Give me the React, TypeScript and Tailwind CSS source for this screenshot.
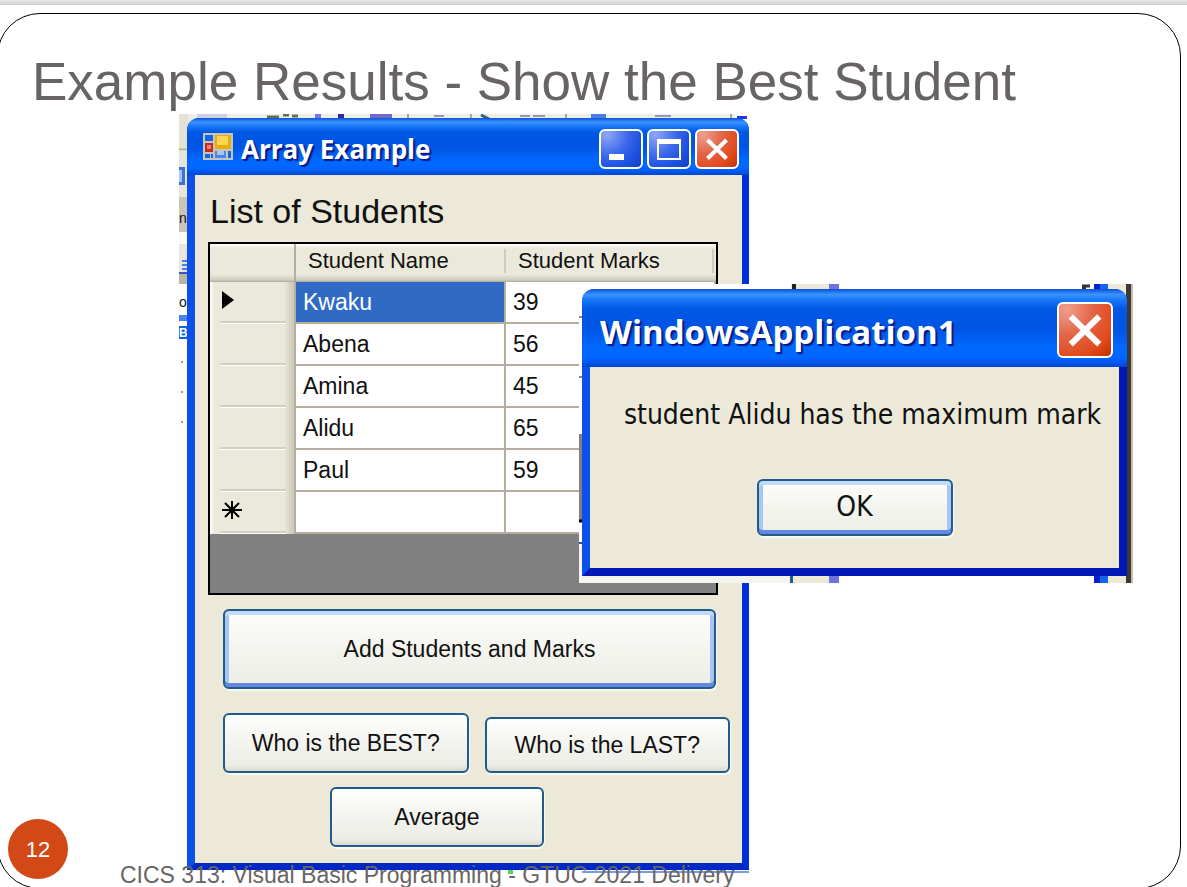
import * as React from "react"

interface Student {
  name: string
  marks: string
}

const students: Student[] = [
  { name: "Kwaku", marks: "39" },
  { name: "Abena", marks: "56" },
  { name: "Amina", marks: "45" },
  { name: "Alidu", marks: "65" },
  { name: "Paul", marks: "59" },
]

const titleBar =
  "flex items-center bg-[linear-gradient(180deg,#0a50d8_0%,#3a94ff_7%,#1a78fa_14%,#0058e6_25%,#0054e3_50%,#0068ff_75%,#0066ff_88%,#0046d5_100%)] font-bold text-white [text-shadow:2px_2px_1px_#0a1883]"

const captionButton =
  "flex items-center justify-center rounded-md border-2 border-white bg-[radial-gradient(circle_at_15%_10%,#8fa8f8_0%,#3a68ea_45%,#1c4fe0_75%,#1440c0_100%)]"

const closeButton =
  "flex items-center justify-center rounded-md border-2 border-white bg-[radial-gradient(circle_at_15%_10%,#f0a090_0%,#e26648_40%,#e24a1c_75%,#c03000_100%)]"

const formButton =
  "rounded-md border-2 border-[#215b8c] bg-[linear-gradient(180deg,#ffffff_0%,#f5f5f1_40%,#eeeee8_88%,#dcd8cc_100%)] text-[23px] leading-6 text-[#111] shadow-[1px_2px_1px_#faf9f3]"

const focusedButton =
  "rounded-md border-2 border-[#215b8c] bg-[linear-gradient(180deg,#fdfdfc_0%,#f4f4ef_50%,#eeeee9_100%)] text-[23px] leading-6 text-[#111] shadow-[inset_0_4px_0_#c3dbfa,inset_0_-4px_0_#6487e0,inset_4px_0_0_#a9c5f4,inset_-4px_0_0_#a9c5f4,1px_2px_1px_#faf9f3]"

function AppIcon() {
  return (
    <svg viewBox="0 0 30 27" className="h-[27px] w-[30px]" aria-hidden="true">
      <rect width="30" height="27" fill="#c5c5bb" />
      <rect x="2" y="2" width="8" height="6" fill="#1565e0" />
      <rect x="2" y="10" width="8" height="9" fill="#c02c22" />
      <rect x="4" y="12" width="4" height="4" fill="#f08070" />
      <rect x="12" y="2" width="16" height="14" fill="#e8ab10" />
      <rect x="14" y="3" width="11" height="9" fill="#ffd650" />
      <rect x="2" y="21" width="5" height="4" fill="#1565e0" />
      <rect x="8" y="21" width="2" height="4" fill="#1565e0" />
      <rect x="12" y="18" width="11" height="7" fill="#4b86e8" />
      <rect x="14" y="18" width="7" height="4" fill="#a5c8fa" />
      <rect x="25" y="18" width="3" height="7" fill="#1565e0" />
    </svg>
  )
}

function CloseIcon({ className }: { className: string }) {
  return (
    <svg viewBox="0 0 24 24" className={className} aria-hidden="true">
      <path d="M2.5 3 21.5 21.500M21.5 3 2.500 21.500" stroke="#fff" strokeWidth="4" />
    </svg>
  )
}

// Pieces of the IDE that show behind the form
function IdeBackdrop() {
  return (
    <svg viewBox="0 0 570 760" className="absolute top-0 left-0 h-[760px] w-[570px]" aria-hidden="true">
      <rect width="570" height="20" fill="#efeee6" />
      <rect width="9" height="35" fill="#e4e2d6" />
      <path d="M0 35.500H9" stroke="#b5b596" strokeWidth="2" />
      <rect y="37" width="9" height="46" fill="#e6e5da" />
      <rect y="53" width="6" height="18" fill="#3f72d8" />
      <rect y="56" width="3" height="12" fill="#a9c6fa" />
      <rect y="83" width="9" height="35" fill="#c9c4b6" />
      <text x="0" y="109" fontSize="14" fill="#111">n</text>
      <rect y="118" width="9" height="12" fill="#fafafa" />
      <rect y="130" width="9" height="30" fill="#e8e7df" />
      <path d="M3 147H9M3 151H9M3 155H9" stroke="#4f7ee0" strokeWidth="2" />
      <path d="M0 159H9" stroke="#355eb0" strokeWidth="2" />
      <rect y="160" width="9" height="10" fill="#b9b5a2" />
      <rect y="170" width="9" height="590" fill="#fff" />
      <text x="0" y="193" fontSize="14" fill="#111">o</text>
      <rect y="201" width="9" height="6" fill="#4c82ee" />
      <rect y="212" width="9" height="13" fill="#1266d4" />
      <text x="0" y="223" fontSize="12" fontWeight="bold" fill="#fff">B</text>
      <path d="M2 248h2M2 278h2M2 308h2" stroke="#999" strokeWidth="2" />
      <rect x="18" width="30" height="4" fill="#cfd0e6" />
      <path d="M88 3h12M104 1h6M113 2h6" stroke="#5f7353" strokeWidth="3" />
      <rect x="136" width="6" height="4" fill="#7a74e8" />
      <rect x="159" width="6" height="4" fill="#302a9c" />
      <rect x="191" width="22" height="4" fill="#7168cc" />
      <path d="M229 0v5M292 0v5M387 0v5M552 0v5" stroke="#a9a88c" strokeWidth="2" />
      <path d="M255 2h10M341 2h10M354 2h12M476 2h16" stroke="#9b96b6" strokeWidth="2" />
      <path d="M302 1l8 4" stroke="#306080" strokeWidth="3" />
      <rect x="412" width="15" height="4" fill="#4c7de0" />
      <rect x="556" width="14" height="30" fill="#fff" />
      <rect x="558" y="2" width="10" height="3" fill="#2336ea" />
      <rect y="756" width="570" height="4" fill="#fff" />
      <path d="M403 758H570" stroke="#7b9be6" strokeWidth="2" />
      <rect x="329" y="756" width="5" height="4" fill="#54d654" />
    </svg>
  )
}

// Slivers of the window that lies under the message box
function MessageBackdrop() {
  return (
    <svg viewBox="0 0 555 299" className="absolute inset-0 h-full w-full" aria-hidden="true">
      <rect width="555" height="299" fill="#fff" />
      <rect x="212" width="38" height="299" fill="#ece9d8" />
      <rect x="213" width="4" height="10" fill="#222" />
      <rect x="250" width="10" height="299" fill="#6f74da" />
      <path d="M503 2h8M503 5h4" stroke="#333" strokeWidth="3" />
      <rect x="515" width="6" height="299" fill="#0a1ed2" />
      <rect x="521" width="8" height="299" fill="#1465ee" />
      <rect x="529" width="19" height="299" fill="#ece9d8" />
      <rect x="547" width="5" height="299" fill="#3c3834" />
      <rect x="552" width="2" height="299" fill="#c5bead" />
      <rect y="150" width="4" height="87" fill="#808080" />
      <path d="M0 33h4M0 93h4" stroke="#8c8878" strokeWidth="2" />
      <path d="M0 237h4" stroke="#000" strokeWidth="3" />
      <path d="M0 259h4" stroke="#215b8c" strokeWidth="2" />
      <rect y="261" width="212" height="38" fill="#f3f3ef" />
      <rect x="211" y="261" width="3" height="38" fill="#215b8c" />
    </svg>
  )
}

function RowHeader({ children }: { children?: React.ReactNode }) {
  return (
    <td className="border-r-2 border-[#b3ae9f] bg-[linear-gradient(90deg,#fff_0px,#ebe9db_4px,#ebe9db_74px,#cfccbb_82px)] p-0">
      <div className="mr-2 ml-[10px] flex h-10 items-center border-b-2 border-[#d0cfc0] pb-1 shadow-[0_1px_0_#fff]">
        {children}
      </div>
    </td>
  )
}

function StudentGrid() {
  return (
    <div className="h-[353px] border-2 border-black bg-[#808080]">
      <table className="w-full table-fixed border-separate border-spacing-0 text-[23px] leading-6 text-[#111]">
        <colgroup>
          <col className="w-[86px]" />
          <col className="w-[210px]" />
          <col />
        </colgroup>
        <thead>
          <tr className="h-[38px] bg-[linear-gradient(180deg,#fff_0px,#ebe9db_4px,#ebe9db_30px,#d0cdbd_36px,#aaa696_38px)] text-left text-[22px]">
            <th className="border-r-2 border-[#b3ae9f] p-0" aria-label="Row" />
            <th className="p-0 pb-1 pl-3 font-normal">
              <div className="border-r-2 border-[#cfccbb]">Student Name</div>
            </th>
            <th className="p-0 pr-[2px] pb-1 pl-3 font-normal">
              <div className="border-r-2 border-[#cfccbb]">Student Marks</div>
            </th>
          </tr>
        </thead>
        <tbody>
          {students.map((student, index) => (
            <tr key={student.name} className="h-[42px]">
              <RowHeader>
                {index === 0 && (
                  <svg viewBox="0 0 12 18" className="ml-[2px] h-[18px] w-3" aria-label="Current row">
                    <path d="M0 0 12 9 0 18Z" fill="#000" />
                  </svg>
                )}
              </RowHeader>
              <td
                className={`border-r-2 border-b-2 border-[#b3ae9f] p-0 pl-[7px] ${
                  index === 0 ? "bg-[#316ac5] text-white" : "bg-white"
                }`}
              >
                {student.name}
              </td>
              <td className="border-r-2 border-b-2 border-[#b3ae9f] bg-white p-0 pl-[7px]">{student.marks}</td>
            </tr>
          ))}
          <tr className="h-[42px]">
            <RowHeader>
              <svg viewBox="0 0 20 20" className="ml-[2px] h-5 w-5" aria-label="New row">
                <path d="M0 10H20M10 1V19M3 3 17 17M17 3 3 17" stroke="#000" strokeWidth="2" />
                <circle cx="10" cy="10" r="3" />
              </svg>
            </RowHeader>
            <td className="border-r-2 border-b-2 border-[#b3ae9f] bg-white" />
            <td className="border-r-2 border-b-2 border-[#b3ae9f] bg-white" />
          </tr>
        </tbody>
      </table>
    </div>
  )
}

function ArrayForm() {
  return (
    <div className="relative w-[570px] pt-1 pl-2 pb-1">
      <IdeBackdrop />
      <div className="relative overflow-hidden rounded-t-xl bg-[#0038dc]">
        <div className={`${titleBar} h-[57px] gap-2 pr-[10px] pl-4`}>
          <AppIcon />
          <h2 className="flex-1 pt-1 font-['Open_Sans','Noto_Sans',sans-serif] text-[26px] leading-8">Array Example</h2>
          <div className="flex gap-1 pt-1">
            <button type="button" aria-label="Minimize" className={`${captionButton} h-10 w-11`}>
              <svg viewBox="0 0 32 28" className="h-7 w-8">
                <rect x="4" y="19" width="15" height="6" fill="#fff" />
              </svg>
            </button>
            <button type="button" aria-label="Maximize" className={`${captionButton} h-10 w-11`}>
              <svg viewBox="0 0 32 28" className="h-7 w-8">
                <path d="M5 5H27V24H5Z" fill="none" stroke="#fff" strokeWidth="2" />
                <rect x="4" y="4" width="24" height="5" fill="#fff" />
              </svg>
            </button>
            <button type="button" aria-label="Close" className={`${closeButton} h-10 w-11`}>
              <CloseIcon className="h-6 w-7" />
            </button>
          </div>
        </div>
        <div className="border-r-[7px] border-b-[7px] border-l-8 border-l-[#0b50e8] border-r-[#0030d8] border-b-[#0028c4] bg-[#ece9d8] pt-4 pr-3 pb-4 pl-[13px]">
          <h3 className="pl-[2px] text-[34px] leading-10 text-[#111]">List of Students</h3>
          <div className="mt-[11px] mr-3">
            <StudentGrid />
          </div>
          <div className="mt-[14px] pr-[14px] pl-[15px]">
            <button type="button" className={`${focusedButton} h-20 w-full`}>
              Add Students and Marks
            </button>
          </div>
          <div className="mt-6 flex items-end gap-4 pl-[15px]">
            <button type="button" className={`${formButton} h-[60px] flex-1`}>
              Who is the BEST?
            </button>
            <button type="button" className={`${formButton} h-14 flex-1`}>
              Who is the LAST?
            </button>
          </div>
          <div className="mt-[14px] flex justify-center pr-16">
            <button type="button" className={`${formButton} h-[60px] w-[214px]`}>
              Average
            </button>
          </div>
        </div>
      </div>
    </div>
  )
}

function MessageBox() {
  return (
    <div className="absolute top-[170px] left-[400px] w-[555px] pt-[5px] pr-[7px] pb-[7px] pl-[3px]">
      <MessageBackdrop />
      <div role="dialog" aria-labelledby="message-title" className="relative overflow-hidden rounded-t-xl bg-[#0038dc]">
        <div className={`${titleBar} h-[78px] justify-between pr-[14px] pl-[18px]`}>
          <h2 id="message-title" className="pt-2 font-['Open_Sans','Noto_Sans',sans-serif] text-[33px] leading-10">
            WindowsApplication1
          </h2>
          <button type="button" aria-label="Close" className={`${closeButton} mt-1 h-14 w-14`}>
            <CloseIcon className="h-9 w-9" />
          </button>
        </div>
        <div className="flex flex-col items-center border-x-8 border-b-8 border-l-[#0b50e8] border-r-[#0018b4] border-b-[#0018b4] bg-[#ece9d8] pt-8 pb-8 font-['DejaVu_Sans_Condensed','DejaVu_Sans',sans-serif]">
          <p className="pl-4 text-[28px] leading-8 whitespace-nowrap text-[#111]">
            student Alidu has the maximum mark
          </p>
          <button type="button" className={`${focusedButton} mt-12 h-[57px] w-[196px]`}>
            <span className="text-[28px]">OK</span>
          </button>
        </div>
      </div>
    </div>
  )
}

export default function App() {
  return (
    <main className="flex h-screen flex-col overflow-hidden bg-white font-['Liberation_Sans',Arial,sans-serif]">
      <div className="h-[5px] shrink-0 bg-[linear-gradient(180deg,#e6e6e6,#cfcfcf)]" />
      <section className="relative mt-2 mr-[6px] -mb-[2px] -ml-[3px] flex-1 rounded-[43px] border border-black">
        <h1 className="pt-[38px] pb-[2px] pl-[34px] text-[53px] leading-[60px] whitespace-nowrap text-[#696464]">
          Example Results - Show the Best Student
        </h1>
        <div className="relative ml-[181px]">
          <ArrayForm />
          <MessageBox />
        </div>
        <div className="absolute bottom-[9px] left-[10px] flex h-[60px] w-[60px] items-center justify-center rounded-full bg-[#d34817] text-[22px] text-white">
          12
        </div>
        <footer className="absolute bottom-px left-[122px] text-[23px] leading-6 whitespace-nowrap text-[#696464]">
          CICS 313: Visual Basic Programming - GTUC 2021 Delivery
        </footer>
      </section>
    </main>
  )
}
